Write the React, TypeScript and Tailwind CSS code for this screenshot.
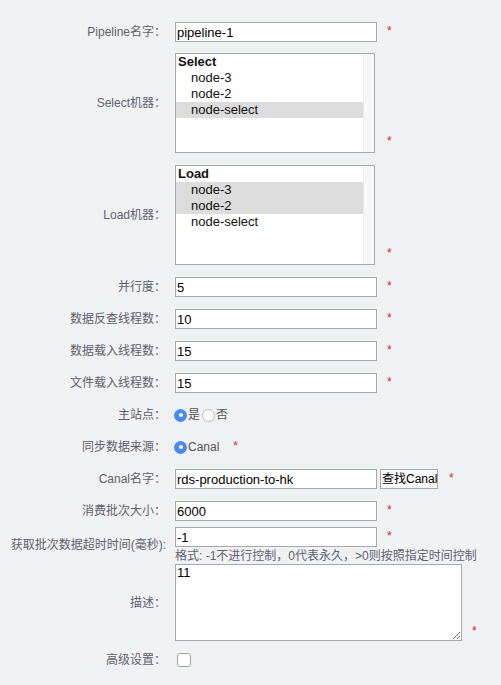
import { FC, ReactNode } from "react";

const Star: FC<{ className?: string }> = ({ className = "" }) => (
  <span className={`text-[12px] leading-[12px] text-[#e02424] ${className}`}>*</span>
);

const Row: FC<{ label: string; className?: string; children: ReactNode }> = ({
  label,
  className = "",
  children,
}) => (
  <div className={`flex items-center ${className}`}>
    <div className="w-[166px] shrink-0 text-right text-[12px] leading-[14px] text-[#5c6370]">
      {label}
    </div>
    <div className="ml-[9px] flex">{children}</div>
  </div>
);

const TextInput: FC<{ value: string; width?: string }> = ({ value, width = "w-[202px]" }) => (
  <input
    readOnly
    defaultValue={value}
    className={`${width} h-[20px] border border-[#a9a9a9] bg-white px-[1px] text-[13px] text-black outline-none`}
  />
);

interface Opt {
  name: string;
  selected?: boolean;
}

const ListBox: FC<{ group: string; options: Opt[] }> = ({ group, options }) => (
  <div className="flex h-[100px] w-[200px] border border-[#a9a9a9] bg-white">
    <div className="flex-1 text-[13px] leading-[16px] text-[#111]">
      <div className="pl-[2px] font-bold">{group}</div>
      {options.map((o) => (
        <div key={o.name} className={`pl-[15px] ${o.selected ? "bg-[#dcdcdc]" : ""}`}>
          {o.name}
        </div>
      ))}
    </div>
    <div className="w-[11px] border-l border-[#ececec] bg-[#f7f7f7]"></div>
  </div>
);

const Radio: FC<{ checked?: boolean }> = ({ checked }) =>
  checked ? (
    <span className="flex h-[13px] w-[13px] items-center justify-center rounded-full bg-[#4a89f3]">
      <span className="h-[4px] w-[4px] rounded-full bg-white"></span>
    </span>
  ) : (
    <span className="h-[13px] w-[13px] rounded-full border border-[#b5b5b5] bg-white"></span>
  );

const App: FC = () => {
  return (
    <div
      className="min-h-screen bg-[#f0f1f3] pt-[22px]"
      style={{ fontFamily: '"Liberation Sans", "Noto Sans CJK SC", sans-serif' }}
    >
      <Row label="Pipeline名字：">
        <div className="flex items-center">
          <TextInput value="pipeline-1" />
          <Star className="ml-[10px] -mt-[3px]" />
        </div>
      </Row>

      <Row label="Select机器：" className="mt-[11px]">
        <div className="flex items-end">
          <ListBox
            group="Select"
            options={[{ name: "node-3" }, { name: "node-2" }, { name: "node-select", selected: true }]}
          />
          <Star className="ml-[12px] mb-[6px]" />
        </div>
      </Row>

      <Row label="Load机器：" className="mt-[12px]">
        <div className="flex items-end">
          <ListBox
            group="Load"
            options={[
              { name: "node-3", selected: true },
              { name: "node-2", selected: true },
              { name: "node-select" },
            ]}
          />
          <Star className="ml-[12px] mb-[6px]" />
        </div>
      </Row>

      {[
        ["并行度：", "5"],
        ["数据反查线程数：", "10"],
        ["数据载入线程数：", "15"],
        ["文件载入线程数：", "15"],
      ].map(([label, value]) => (
        <Row key={label} label={label} className="mt-[12px]">
          <div className="flex items-center">
            <TextInput value={value} />
            <Star className="ml-[10px] -mt-[3px]" />
          </div>
        </Row>
      ))}

      <Row label="主站点：" className="mt-[12px] h-[20px]">
        <div className="-ml-[1px] flex items-center text-[12px] text-[#555]">
          <Radio checked />
          <span className="ml-[1px]">是</span>
          <span className="ml-[2px] flex">
            <Radio />
          </span>
          <span className="ml-[1px]">否</span>
        </div>
      </Row>

      <Row label="同步数据来源：" className="mt-[12px] h-[20px]">
        <div className="-ml-[1px] flex items-center text-[12px] text-[#555]">
          <Radio checked />
          <span className="ml-[1px]">Canal</span>
          <Star className="ml-[14px] -mt-[3px]" />
        </div>
      </Row>

      <Row label="Canal名字：" className="mt-[12px]">
        <div className="flex items-center">
          <TextInput value="rds-production-to-hk" />
          <button className="ml-[3px] h-[20px] w-[58px] whitespace-nowrap border border-[#a9a9a9] bg-[#f7f7f7] pl-[1px] text-left text-[12px] leading-[18px] text-black">
            查找Canal
          </button>
          <Star className="ml-[11px] -mt-[3px]" />
        </div>
      </Row>

      <Row label="消费批次大小：" className="mt-[12px]">
        <div className="flex items-center">
          <TextInput value="6000" />
          <Star className="ml-[10px] -mt-[3px]" />
        </div>
      </Row>

      <Row label="获取批次数据超时时间(毫秒):" className="mt-[6px]">
        <div className="flex flex-col">
          <div className="flex items-center">
            <TextInput value="-1" />
            <Star className="ml-[10px] -mt-[3px]" />
          </div>
          <div className="mt-[2px] text-[12px] leading-[14px] text-[#5c6370]">
            格式: -1不进行控制，0代表永久，&gt;0则按照指定时间控制
          </div>
        </div>
      </Row>

      <Row label="描述：" className="mt-[1px]">
        <div className="flex items-end">
          <textarea
            readOnly
            defaultValue="11"
            className="h-[77px] w-[287px] border border-[#a9a9a9] bg-white px-[1px] py-0 text-[13px] leading-[16px] text-black outline-none"
          />
          <Star className="ml-[10px] mb-[4px]" />
        </div>
      </Row>

      <Row label="高级设置：" className="mt-[12px]">
        <div className="ml-[2px] h-[14px] w-[14px] rounded-[3px] border border-[#a6a6a6] bg-white"></div>
      </Row>
    </div>
  );
};

export default App;
